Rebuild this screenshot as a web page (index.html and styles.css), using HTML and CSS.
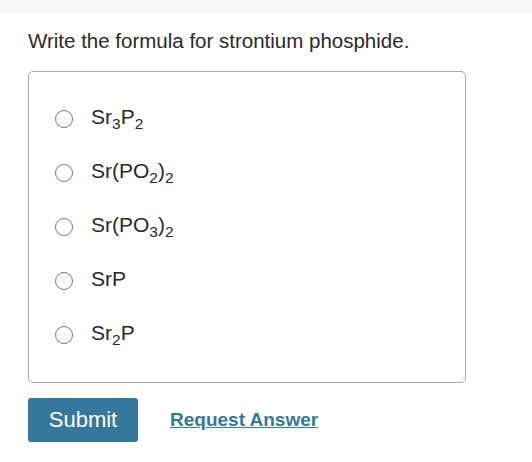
FILE: index.html
```html
<!DOCTYPE html>
<html>
<head>
<meta charset="utf-8">
<link rel="stylesheet" href="styles.css">
</head>
<body>
<div class="topbar"></div>
<div class="content">
  <p class="prompt">Write the formula for strontium phosphide.</p>
  <div class="choices">
    <label class="choice"><span class="radio"></span><span class="formula">Sr<sub>3</sub>P<sub>2</sub></span></label>
    <label class="choice"><span class="radio"></span><span class="formula">Sr(PO<sub>2</sub>)<sub>2</sub></span></label>
    <label class="choice"><span class="radio"></span><span class="formula">Sr(PO<sub>3</sub>)<sub>2</sub></span></label>
    <label class="choice"><span class="radio"></span><span class="formula">SrP</span></label>
    <label class="choice"><span class="radio"></span><span class="formula">Sr<sub>2</sub>P</span></label>
  </div>
  <div class="actions">
    <button class="submit">Submit</button>
    <a class="request" href="#">Request Answer</a>
  </div>
</div>
</body>
</html>
```
FILE: styles.css
```css
html, body {
  margin: 0;
  padding: 0;
  background: #ffffff;
  font-family: "Liberation Sans", Arial, sans-serif;
  color: #2a2a2a;
}
.topbar {
  height: 13px;
  background: #f6f6f6;
}
.content {
  padding: 0 0 0 28px;
  width: 438px;
}
.prompt {
  margin: 17px 0 0 0;
  font-size: 20.5px;
  line-height: 22px;
  color: #2a2a2a;
}
.choices {
  margin-top: 19px;
  border: 1px solid #aaaaaa;
  border-radius: 5px;
  padding: 27px 0 27px 0;
  display: flex;
  flex-direction: column;
  gap: 14px;
}
.choice {
  display: flex;
  align-items: center;
  height: 40px;
  padding-left: 26px;
}
.radio {
  width: 18px;
  height: 18px;
  border: 1.5px solid #777777;
  border-radius: 50%;
  box-sizing: border-box;
  flex: none;
}
.formula {
  margin-left: 18px;
  margin-top: -4px;
  font-size: 21px;
  line-height: 22px;
  color: #2a2a2a;
}
.formula sub {
  font-size: 15.5px;
  line-height: 0;
  vertical-align: -5px;
}
.actions {
  margin-top: 15px;
  display: flex;
  align-items: center;
  gap: 32px;
}
.submit {
  width: 110px;
  height: 44px;
  background: #35789b;
  color: #ffffff;
  border: none;
  border-radius: 3px;
  font-family: "Liberation Sans", Arial, sans-serif;
  font-size: 22px;
  padding: 0;
}
.request {
  font-size: 19px;
  font-weight: bold;
  color: #35789b;
  text-decoration: underline;
}
```
